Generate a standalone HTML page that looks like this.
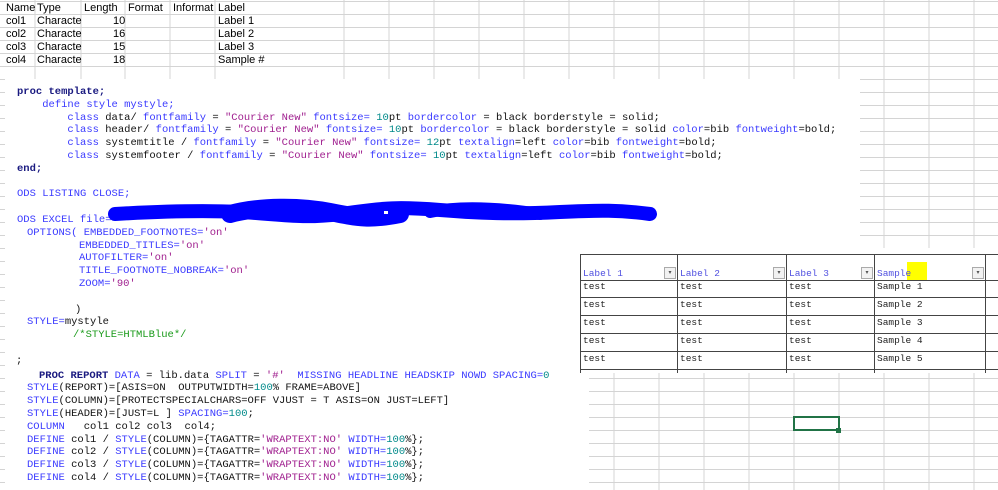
<!DOCTYPE html>
<html><head><meta charset="utf-8">
<style>
html,body{margin:0;padding:0;width:998px;height:490px;overflow:hidden;background:#fff;position:relative}
.t{position:absolute;font:11px "Liberation Sans",sans-serif;color:#000;white-space:nowrap;line-height:13px}
#code{position:absolute;left:17px;top:86px;font:10.5px "Liberation Mono",monospace;color:#111}
#code div{height:12.8px;line-height:12.8px;white-space:pre}
.k{color:#3a3aff}.s{color:#a0208f}.n{color:#008a8a}.d{color:#1a1a80;font-weight:bold}.c{color:#1a9a1a}
#tbl{position:absolute;left:577px;top:248px;width:421px;height:125px;background:#fff;overflow:hidden}
#tbl .r{position:absolute;left:3px;width:440px;border-top:1.5px solid #444}
#tbl .v{position:absolute;top:6px;height:125px;border-left:1.5px solid #444}
#tbl span{position:absolute;font:9.5px "Liberation Mono",monospace;color:#222;white-space:nowrap}
#tbl .h{color:#5050e0}
#tbl .fb{position:absolute;width:10px;height:10px;border:1px solid #aaa;background:#f2f2f2;font:6px sans-serif;color:#555;text-align:center;line-height:10px}
</style></head><body>
<svg width="998" height="490" style="position:absolute;left:0;top:0">
<g stroke="#d4d4d4" stroke-width="1">
<line x1="35" y1="0" x2="35" y2="79"/><line x1="81" y1="0" x2="81" y2="79"/><line x1="125" y1="0" x2="125" y2="79"/><line x1="170" y1="0" x2="170" y2="79"/><line x1="215" y1="0" x2="215" y2="79"/>
<line x1="344" y1="0" x2="344" y2="490"/><line x1="389" y1="0" x2="389" y2="490"/><line x1="434" y1="0" x2="434" y2="490"/><line x1="479" y1="0" x2="479" y2="490"/><line x1="524" y1="0" x2="524" y2="490"/><line x1="569" y1="0" x2="569" y2="490"/><line x1="614" y1="0" x2="614" y2="490"/><line x1="659" y1="0" x2="659" y2="490"/><line x1="704" y1="0" x2="704" y2="490"/><line x1="749" y1="0" x2="749" y2="490"/><line x1="794" y1="0" x2="794" y2="490"/><line x1="839" y1="0" x2="839" y2="490"/><line x1="884" y1="0" x2="884" y2="490"/><line x1="929" y1="0" x2="929" y2="490"/><line x1="974" y1="0" x2="974" y2="490"/>
</g>
<g stroke="#d4d4d4" stroke-width="1" id="hz"></g>
</svg>
<script>
var g=document.getElementById('hz'),s='';
for(var y=1;y<490;y+=13){s+='<line x1="0" y1="'+(y+0.5)+'" x2="998" y2="'+(y+0.5)+'"/>';}
g.innerHTML=s;
</script>
<svg width="998" height="490" style="position:absolute;left:0;top:0;pointer-events:none">
<rect x="5" y="79" width="855" height="171" fill="#fff"/>
<rect x="5" y="79" width="584" height="411" fill="#fff"/>
<rect x="794" y="417" width="45" height="13" fill="none" stroke="#217346" stroke-width="2"/>
<rect x="836" y="428" width="5" height="5" fill="#217346"/>
</svg>

<div class="t" style="left:6px;top:2px">Name</div><div class="t" style="left:37px;top:2px">Type</div><div class="t" style="left:84px;top:2px">Length</div><div class="t" style="left:128px;top:2px">Format</div><div class="t" style="left:173px;top:2px">Informat</div><div class="t" style="left:218px;top:2px">Label</div>
<div class="t" style="left:6px;top:15px">col1</div><div class="t" style="left:37px;top:15px">Characte</div><div class="t" style="left:113px;top:15px">10</div><div class="t" style="left:218px;top:15px">Label 1</div>
<div class="t" style="left:6px;top:28px">col2</div><div class="t" style="left:37px;top:28px">Characte</div><div class="t" style="left:113px;top:28px">16</div><div class="t" style="left:218px;top:28px">Label 2</div>
<div class="t" style="left:6px;top:41px">col3</div><div class="t" style="left:37px;top:41px">Characte</div><div class="t" style="left:113px;top:41px">15</div><div class="t" style="left:218px;top:41px">Label 3</div>
<div class="t" style="left:6px;top:54px">col4</div><div class="t" style="left:37px;top:54px">Characte</div><div class="t" style="left:113px;top:54px">18</div><div class="t" style="left:218px;top:54px">Sample #</div>

<div id="code"><div class="d">proc template;</div><div>    <span class="k">define style mystyle;</span></div><div>        <span class="k">class</span> data/ <span class="k">fontfamily</span> = <span class="s">"Courier New"</span> <span class="k">fontsize=</span> <span class="n">10</span>pt <span class="k">bordercolor</span> = black borderstyle = solid;</div><div>        <span class="k">class</span> header/ <span class="k">fontfamily</span> = <span class="s">"Courier New"</span> <span class="k">fontsize=</span> <span class="n">10</span>pt <span class="k">bordercolor</span> = black borderstyle = solid <span class="k">color</span>=bib <span class="k">fontweight</span>=bold;</div><div>        <span class="k">class</span> systemtitle / <span class="k">fontfamily</span> = <span class="s">"Courier New"</span> <span class="k">fontsize=</span> <span class="n">12</span>pt <span class="k">textalign</span>=left <span class="k">color</span>=bib <span class="k">fontweight</span>=bold;</div><div>        <span class="k">class</span> systemfooter / <span class="k">fontfamily</span> = <span class="s">"Courier New"</span> <span class="k">fontsize=</span> <span class="n">10</span>pt <span class="k">textalign</span>=left <span class="k">color</span>=bib <span class="k">fontweight</span>=bold;</div><div class="d">end;</div><div></div><div class="k">ODS LISTING CLOSE;</div><div></div><div class="k">ODS EXCEL file=</div><div style="padding-left:10px"><span class="k">OPTIONS( EMBEDDED_FOOTNOTES=</span><span class="s">'on'</span></div><div style="padding-left:62px"><span class="k">EMBEDDED_TITLES=</span><span class="s">'on'</span></div><div style="padding-left:62px"><span class="k">AUTOFILTER=</span><span class="s">'on'</span></div><div style="padding-left:62px"><span class="k">TITLE_FOOTNOTE_NOBREAK=</span><span class="s">'on'</span></div><div style="padding-left:62px"><span class="k">ZOOM=</span><span class="s">'90'</span></div><div></div><div style="padding-left:58px">)</div><div style="padding-left:10px"><span class="k">STYLE=</span>mystyle</div><div style="padding-left:56px" class="c">/*STYLE=HTMLBlue*/</div><div></div><div style="margin-left:-1px">;</div><div style="padding-left:22px;margin-top:2px"><span class="d">PROC REPORT</span> <span class="k">DATA</span> = lib.data <span class="k">SPLIT</span> = <span class="s">'#'</span>  <span class="k">MISSING HEADLINE HEADSKIP NOWD SPACING=</span><span class="n">0</span></div><div style="padding-left:10px"><span class="k">STYLE</span>(REPORT)=[ASIS=ON  OUTPUTWIDTH=<span class="n">100</span>% FRAME=ABOVE]</div><div style="padding-left:10px"><span class="k">STYLE</span>(COLUMN)=[PROTECTSPECIALCHARS=OFF VJUST = T ASIS=ON JUST=LEFT]</div><div style="padding-left:10px"><span class="k">STYLE</span>(HEADER)=[JUST=L ] <span class="k">SPACING=</span><span class="n">100</span>;</div><div style="padding-left:10px"><span class="k">COLUMN</span>   col1 col2 col3  col4;</div><div style="padding-left:10px"><span class="k">DEFINE</span> col1 / <span class="k">STYLE</span>(COLUMN)={TAGATTR=<span class="s">'WRAPTEXT:NO'</span> <span class="k">WIDTH=</span><span class="n">100</span>%};</div><div style="padding-left:10px"><span class="k">DEFINE</span> col2 / <span class="k">STYLE</span>(COLUMN)={TAGATTR=<span class="s">'WRAPTEXT:NO'</span> <span class="k">WIDTH=</span><span class="n">100</span>%};</div><div style="padding-left:10px"><span class="k">DEFINE</span> col3 / <span class="k">STYLE</span>(COLUMN)={TAGATTR=<span class="s">'WRAPTEXT:NO'</span> <span class="k">WIDTH=</span><span class="n">100</span>%};</div><div style="padding-left:10px"><span class="k">DEFINE</span> col4 / <span class="k">STYLE</span>(COLUMN)={TAGATTR=<span class="s">'WRAPTEXT:NO'</span> <span class="k">WIDTH=</span><span class="n">100</span>%};</div></div>

<svg width="998" height="490" style="position:absolute;left:0;top:0;pointer-events:none">
<g stroke="#0000ff" stroke-linecap="round" fill="none">
<path d="M115 214 C150 212,200 210,240 212 S300 219,340 214 S390 206,440 210 S520 214,560 212 S620 210,650 214" stroke-width="14"/>
<path d="M230 214 C260 206,300 206,330 212 S370 220,400 214" stroke-width="18"/>
<path d="M430 212 C460 206,500 208,540 214" stroke-width="12"/>
</g>
<rect x="384" y="211" width="4" height="3" fill="#fff"/>
</svg>

<div id="tbl">
<div style="position:absolute;left:330px;top:14px;width:20px;height:18px;background:#ffff00"></div>
<div class="r" style="top:6px"></div><div class="r" style="top:32px"></div><div class="r" style="top:49px"></div><div class="r" style="top:67px"></div><div class="r" style="top:85px"></div><div class="r" style="top:103px"></div><div class="r" style="top:121px"></div>
<div class="v" style="left:3px"></div><div class="v" style="left:100px"></div><div class="v" style="left:209px"></div><div class="v" style="left:297px"></div><div class="v" style="left:408px"></div>
<span class="h" style="left:6px;top:20px">Label 1</span><span class="h" style="left:103px;top:20px">Label 2</span><span class="h" style="left:212px;top:20px">Label 3</span><span class="h" style="left:300px;top:20px">Sample</span>
<div class="fb" style="left:87px;top:19px">▾</div><div class="fb" style="left:196px;top:19px">▾</div><div class="fb" style="left:284px;top:19px">▾</div><div class="fb" style="left:395px;top:19px">▾</div>
<span style="left:6px;top:33px">test</span><span style="left:103px;top:33px">test</span><span style="left:212px;top:33px">test</span><span style="left:300px;top:33px">Sample 1</span>
<span style="left:6px;top:51px">test</span><span style="left:103px;top:51px">test</span><span style="left:212px;top:51px">test</span><span style="left:300px;top:51px">Sample 2</span>
<span style="left:6px;top:69px">test</span><span style="left:103px;top:69px">test</span><span style="left:212px;top:69px">test</span><span style="left:300px;top:69px">Sample 3</span>
<span style="left:6px;top:87px">test</span><span style="left:103px;top:87px">test</span><span style="left:212px;top:87px">test</span><span style="left:300px;top:87px">Sample 4</span>
<span style="left:6px;top:105px">test</span><span style="left:103px;top:105px">test</span><span style="left:212px;top:105px">test</span><span style="left:300px;top:105px">Sample 5</span>
</div>
</body></html>
